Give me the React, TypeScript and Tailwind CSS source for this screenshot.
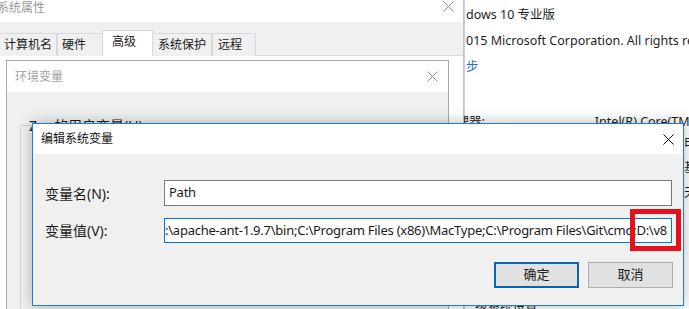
import React from 'react';

const CloseIcon = ({ className = '' }: { className?: string }) => (
  <svg width="11" height="11" viewBox="0 0 11 11" className={className}>
    <path d="M0.5 0.5L10.5 10.5M10.5 0.5L0.5 10.5" stroke="currentColor" strokeWidth="1" fill="none" />
  </svg>
);

// 背景里的系统信息窗口
const InfoWindow = () => (
  <div className="absolute left-[464px] top-0 w-[225px] h-full bg-white border-l border-[#cfcfcf] flex flex-col text-[12.5px] leading-[16px] text-[#1e1e1e] whitespace-nowrap">
    <div className="mt-[7px] pl-[1px]">dows 10 专业版</div>
    <div className="mt-[10px] pl-[1px]">015 Microsoft Corporation. All rights reserved.</div>
    <div className="mt-[10px] pl-[1px] text-[#1f6fc5]">步</div>
    <div className="mt-[22px] h-px bg-[#dadada]" />
    <div className="mt-[17px] flex">
      <span className="-ml-[21px]">处理器:</span>
      <span className="ml-[110px]">Intel(R) Core(TM) i5</span>
    </div>
    <div className="flex flex-col pl-[219px]">
      <span className="mt-[4px]">由</span>
      <span className="mt-[10px]">基</span>
      <span className="mt-[9px]">天</span>
    </div>
    <div className="mt-[98px] pl-[10px]">级系统设置</div>
  </div>
);

const tabs = [
  { label: '计算机名', w: 'w-[61px] pl-[7px]' },
  { label: '硬件', w: 'w-[46px] pl-[4px]' },
  { label: '高级', w: 'w-[51px] pl-[9px]', active: true },
  { label: '系统保护', w: 'w-[60px] pl-[5px]' },
  { label: '远程', w: 'w-[44px] pl-[5px]' },
];

// 系统属性
const SystemProps = () => (
  <div className="absolute left-0 top-0 w-[464px] h-full bg-[#f0f0f0] border-r border-[#c4c4c4] flex flex-col">
    <div className="h-[22px] bg-white flex items-start justify-between">
      <span className="-ml-[3px] text-[12px] leading-[16px] text-[#9a9a9a]">系统属性</span>
      <CloseIcon className="mt-[1px] mr-[9px] text-[#8a8a8a]" />
    </div>
    <div className="mt-[8px] h-[26px] flex items-end -ml-[4px] relative z-10">
      {tabs.map((t) =>
        t.active ? (
          <div
            key={t.label}
            className={`${t.w} h-[26px] -mx-[1px] bg-white border border-b-0 border-[#d9d9d9] text-[12px] leading-[22px] text-[#1a1a1a]`}
          >
            {t.label}
          </div>
        ) : (
          <div
            key={t.label}
            className={`${t.w} h-[23px] bg-[#f0f0f0] border border-b-0 border-[#d9d9d9] text-[12px] leading-[22px] text-[#1a1a1a]`}
          >
            {t.label}
          </div>
        ),
      )}
    </div>
    <div className="flex-1 bg-white border-t border-[#d9d9d9] -mt-px" />
  </div>
);

// 环境变量
const EnvDialog = () => (
  <div className="absolute left-[6px] top-[60px] w-[443px] h-[260px] bg-[#f0f0f0] border border-[#a9a9a9] flex flex-col">
    <div className="h-[31px] bg-white flex items-center justify-between">
      <span className="pl-[8px] text-[12px] text-[#a3a3a3]">环境变量</span>
      <CloseIcon className="mr-[10px] text-[#8c8c8c]" />
    </div>
    <div className="relative mt-[33px] ml-[13px] mr-[13px] flex-1 border-l border-t border-[#d6d6d6]">
      <div className="absolute -top-[8px] left-[8px] flex text-[14px] leading-[16px] text-[#222]">
        <span>Z</span>
        <span className="ml-[16px] bg-[#f0f0f0] px-[1px]">的用户变量(U)</span>
      </div>
    </div>
  </div>
);

// 编辑系统变量
const EditDialog = () => (
  <div className="absolute left-[32px] top-[123px] w-[652px] h-[183px] bg-[#f0f0f0] border border-[#1a7fd4] shadow-[0_0_14px_rgba(0,0,0,0.28)] flex flex-col">
    <div className="h-[30px] bg-white flex items-center justify-between">
      <span className="pl-[8px] text-[12px] text-[#111]">编辑系统变量</span>
      <CloseIcon className="mr-[9px] text-[#111]" />
    </div>
    <div className="flex flex-col pt-[26px] pl-[12px]">
      <div className="flex items-center">
        <span className="w-[119px] text-[14px] text-[#1a1a1a]">变量名(N):</span>
        <div className="w-[508px] h-[26px] bg-white border border-[#7a7a7a] flex items-center px-[4px] text-[13px] tracking-[-0.25px] text-[#1a1a1a]">
          Path
        </div>
      </div>
      <div className="mt-[12px] flex items-center">
        <span className="w-[119px] text-[14px] text-[#1a1a1a]">变量值(V):</span>
        <div className="w-[508px] h-[25px] bg-white border border-[#0078d7] flex items-center justify-end overflow-hidden whitespace-nowrap pr-[4px] text-[13px] tracking-[-0.25px] text-[#1a1a1a]">
          <span>C:\Program Files\Java\jdk1.8.0\bin;D:\apache-ant-1.9.7\bin;C:\Program Files (x86)\MacType;C:\Program Files\Git\cmd;</span>
          <span className="inline-block w-px h-[15px] bg-black" />
          <span>D:\v8</span>
        </div>
      </div>
      <div className="mt-[19px] flex justify-end gap-[9px] pr-[10px]">
        <button className="w-[85px] h-[26px] bg-[#e1e1e1] border-2 border-[#0a64b4] text-[13px] text-[#1a1a1a]">
          确定
        </button>
        <button className="w-[85px] h-[26px] bg-[#e1e1e1] border border-[#adadad] text-[13px] text-[#1a1a1a]">
          取消
        </button>
      </div>
    </div>
  </div>
);

export default function App() {
  return (
    <div className="relative w-[689px] h-[309px] overflow-hidden bg-white font-['Noto_Sans','Noto_Sans_CJK_SC',sans-serif]">
      <InfoWindow />
      <SystemProps />
      <EnvDialog />
      <EditDialog />
      {/* 红色标注框 */}
      <div className="absolute left-[630px] top-[209px] w-[51px] h-[42px] border-[5px] border-[#e5121d]" />
    </div>
  );
}
